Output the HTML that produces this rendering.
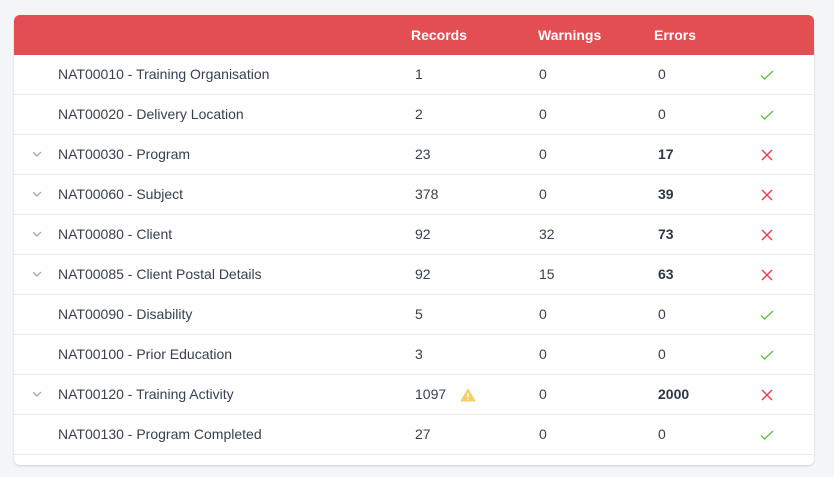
<!DOCTYPE html>
<html><head><style>
body{margin:0;background:#f4f5f7;font-family:"Liberation Sans",sans-serif;font-size:14px;color:#374151;}
.card{position:absolute;left:14px;top:15px;width:800px;height:450px;background:#fff;border-radius:6px;box-shadow:0 1px 2px rgba(0,0,0,.15);overflow:hidden;}
.hd{height:40px;background:#e24e51;color:#fff;position:relative;font-weight:600;}
.row{height:39px;border-bottom:1px solid #e8eaed;position:relative;}
.c{position:absolute;top:0;line-height:39px;white-space:nowrap;}
.hd .c{line-height:40px;}
.n{left:44px}.r{left:401px}.w{left:525px}.e{left:644px}
.i{left:746px;top:13px}
.ch{left:18px;top:15px}
b{font-weight:700;color:#2d3748}
</style></head><body>
<div class="card">
<div class="hd"><span class="c r" style="left:397px">Records</span><span class="c w" style="left:524px">Warnings</span><span class="c e" style="left:640px">Errors</span></div>
<div id="rows"></div>
</div>
<script></script>
<div style="display:none"></div>
<div class="card" style="background:transparent;box-shadow:none;top:55px;height:auto;overflow:visible">
<!-- rows -->
<div class="row"><span class="c n">NAT00010 - Training Organisation</span><span class="c r">1</span><span class="c w">0</span><span class="c e">0</span><svg class="c i" width="14" height="14" viewBox="0 0 14 14"><path d="M1 7.5l3.5 3.5L13 3" fill="none" stroke="#6cbd45" stroke-width="1.4"/></svg></div>
<div class="row"><span class="c n">NAT00020 - Delivery Location</span><span class="c r">2</span><span class="c w">0</span><span class="c e">0</span><svg class="c i" width="14" height="14" viewBox="0 0 14 14"><path d="M1 7.5l3.5 3.5L13 3" fill="none" stroke="#6cbd45" stroke-width="1.4"/></svg></div>
<div class="row"><svg class="c ch" width="10" height="8" viewBox="0 0 10 8"><path d="M1 2l4 4 4-4" fill="none" stroke="#9aa3ae" stroke-width="1.2"/></svg><span class="c n">NAT00030 - Program</span><span class="c r">23</span><span class="c w">0</span><span class="c e"><b>17</b></span><svg class="c i" width="14" height="14" viewBox="0 0 14 14"><path d="M2 2l10 10M12 2L2 12" stroke="#e53e4e" stroke-width="1.4"/></svg></div>
<div class="row"><svg class="c ch" width="10" height="8" viewBox="0 0 10 8"><path d="M1 2l4 4 4-4" fill="none" stroke="#9aa3ae" stroke-width="1.2"/></svg><span class="c n">NAT00060 - Subject</span><span class="c r">378</span><span class="c w">0</span><span class="c e"><b>39</b></span><svg class="c i" width="14" height="14" viewBox="0 0 14 14"><path d="M2 2l10 10M12 2L2 12" stroke="#e53e4e" stroke-width="1.4"/></svg></div>
<div class="row"><svg class="c ch" width="10" height="8" viewBox="0 0 10 8"><path d="M1 2l4 4 4-4" fill="none" stroke="#9aa3ae" stroke-width="1.2"/></svg><span class="c n">NAT00080 - Client</span><span class="c r">92</span><span class="c w">32</span><span class="c e"><b>73</b></span><svg class="c i" width="14" height="14" viewBox="0 0 14 14"><path d="M2 2l10 10M12 2L2 12" stroke="#e53e4e" stroke-width="1.4"/></svg></div>
<div class="row"><svg class="c ch" width="10" height="8" viewBox="0 0 10 8"><path d="M1 2l4 4 4-4" fill="none" stroke="#9aa3ae" stroke-width="1.2"/></svg><span class="c n">NAT00085 - Client Postal Details</span><span class="c r">92</span><span class="c w">15</span><span class="c e"><b>63</b></span><svg class="c i" width="14" height="14" viewBox="0 0 14 14"><path d="M2 2l10 10M12 2L2 12" stroke="#e53e4e" stroke-width="1.4"/></svg></div>
<div class="row"><span class="c n">NAT00090 - Disability</span><span class="c r">5</span><span class="c w">0</span><span class="c e">0</span><svg class="c i" width="14" height="14" viewBox="0 0 14 14"><path d="M1 7.5l3.5 3.5L13 3" fill="none" stroke="#6cbd45" stroke-width="1.4"/></svg></div>
<div class="row"><span class="c n">NAT00100 - Prior Education</span><span class="c r">3</span><span class="c w">0</span><span class="c e">0</span><svg class="c i" width="14" height="14" viewBox="0 0 14 14"><path d="M1 7.5l3.5 3.5L13 3" fill="none" stroke="#6cbd45" stroke-width="1.4"/></svg></div>
<div class="row"><svg class="c ch" width="10" height="8" viewBox="0 0 10 8"><path d="M1 2l4 4 4-4" fill="none" stroke="#9aa3ae" stroke-width="1.2"/></svg><span class="c n">NAT00120 - Training Activity</span><span class="c r">1097</span><svg class="c" style="left:446px;top:13px" width="16" height="14" viewBox="0 0 16 14"><path d="M8 1L15 13H1Z" fill="#f6cf6b" stroke="#f6cf6b" stroke-linejoin="round"/><path d="M8 5v4M8 10.5v1" stroke="#fff" stroke-width="1.5"/></svg><span class="c w">0</span><span class="c e"><b>2000</b></span><svg class="c i" width="14" height="14" viewBox="0 0 14 14"><path d="M2 2l10 10M12 2L2 12" stroke="#e53e4e" stroke-width="1.4"/></svg></div>
<div class="row"><span class="c n">NAT00130 - Program Completed</span><span class="c r">27</span><span class="c w">0</span><span class="c e">0</span><svg class="c i" width="14" height="14" viewBox="0 0 14 14"><path d="M1 7.5l3.5 3.5L13 3" fill="none" stroke="#6cbd45" stroke-width="1.4"/></svg></div>
</div>
</body></html>
